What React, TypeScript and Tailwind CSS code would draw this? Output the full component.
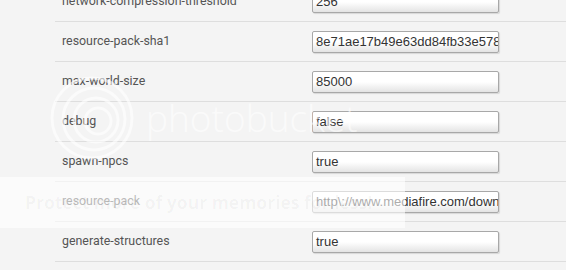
import React from 'react';

const rows = [
    { key: 'network-compression-threshold', value: '256' },
    { key: 'resource-pack-sha1', value: '8e71ae17b49e63dd84fb33e578' },
    { key: 'max-world-size', value: '85000' },
    { key: 'debug', value: 'false' },
    { key: 'spawn-npcs', value: 'true' },
    { key: 'resource-pack', value: 'http\\://www.mediafire.com/download' },
    { key: 'generate-structures', value: 'true' },
];

const App: React.FC = () => {
    return (
        <div className="relative w-[566px] h-[270px] overflow-hidden bg-[#f4f4f4]">
            {/* Properties table */}
            <div className="-mt-[18px] ml-[55px]">
                {rows.map((row) => (
                    <div key={row.key} className="flex items-center h-[40px] border-b border-[#dedede]">
                        <div className="w-[250px] pl-[7px] text-[12.4px] text-[#555] font-['Roboto',sans-serif]">
                            {row.key}
                        </div>
                        <div className="pl-[7px]">
                            <div className="w-[187px] h-[22px] border border-[#a8a8a8] rounded-[2px] bg-gradient-to-b from-white via-white to-[#e4e4e4] shadow-[1px_1px_1px_rgba(0,0,0,0.12)] overflow-hidden flex items-center pl-[3px]">
                                <span className="whitespace-nowrap text-[13px] text-[#333] font-['Liberation_Sans',Arial,sans-serif]">
                                    {row.value}
                                </span>
                            </div>
                        </div>
                    </div>
                ))}
            </div>

            {/* photobucket watermark */}
            <svg className="absolute left-[44px] top-[72px]" width="100" height="100" viewBox="0 0 100 100" fill="none">
                <circle cx="48" cy="46" r="40" stroke="rgba(255,255,255,0.6)" strokeWidth="3" />
                <circle cx="50" cy="47" r="31" stroke="rgba(255,255,255,0.6)" strokeWidth="3" />
                <circle cx="52" cy="48" r="22" stroke="rgba(255,255,255,0.6)" strokeWidth="3" />
                <circle cx="54" cy="49" r="13" stroke="rgba(255,255,255,0.6)" strokeWidth="3" />
            </svg>
            <div className="absolute left-[146px] top-[99px] text-[37px] leading-none text-white/60 font-['Open_Sans',sans-serif] font-light">
                photobucket
            </div>
            <div className="absolute left-0 top-[177px] w-[405px] h-[51px] bg-white/60 flex items-center pl-[25px]">
                <span className="text-[17.5px] font-bold text-black/[0.04] font-['Open_Sans',sans-serif] whitespace-nowrap">
                    Protect more of your memories for less!
                </span>
            </div>
        </div>
    );
};

export default App;
